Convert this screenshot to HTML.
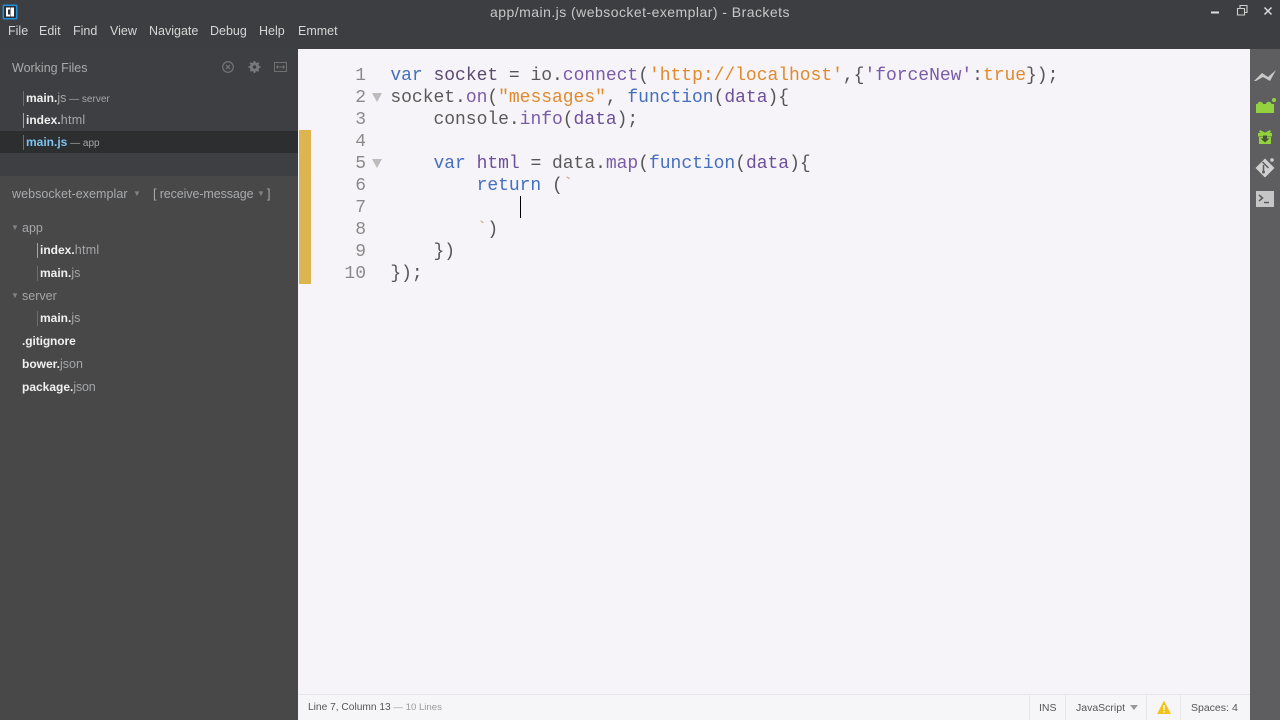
<!DOCTYPE html>
<html><head><meta charset="utf-8"><style>
html,body{margin:0;padding:0;width:1280px;height:720px;overflow:hidden;background:#f6f4f8}
div,span{box-sizing:border-box}
.a{position:absolute;white-space:pre;line-height:16px}
body{font-family:"Liberation Sans",sans-serif;font-size:12.5px;color:#e0e0e0}
#top{position:absolute;left:0;top:0;width:1280px;height:49px;background:#3d3e41}
#wf{position:absolute;left:0;top:49px;width:298px;height:127px;background:#3e3f42}
#tree{position:absolute;left:0;top:176px;width:298px;height:544px;background:#484849}
#sel{position:absolute;left:0;top:131px;width:298px;height:22px;background:#2d2e30}
#bar{position:absolute;left:1250px;top:49px;width:30px;height:671px;background:#5e5e60}
#st{position:absolute;left:298px;top:694px;width:952px;height:26px;background:#f6f6f8;border-top:1px solid #e6e6e8}
.m{color:#d6d6d6;top:23px;font-size:12.5px}
.b{font-weight:bold;color:#f0f0f0;font-size:12px}
.g{color:#a5a6a8;font-size:12.5px}
.s{color:#a5a6a8;font-size:10px}
.bar{position:absolute;width:1px;height:15px}
.code{position:absolute;left:390.4px;top:65px;font:18px/22px "Liberation Mono",monospace;color:#555;white-space:pre;letter-spacing:-.03px}
.ln{position:absolute;left:330px;width:36px;text-align:right;font:18px/22px "Liberation Mono",monospace;color:#8a8a8a}
.k{color:#446fbd}.v{color:#6c4f9a}.d{color:#5b4a70}.str{color:#e08a2c}.bt{color:#c9a47e}.t{color:#5a5a5a}.pr{color:#7a5ba8}
.fold{position:absolute;left:372px;width:0;height:0;border-left:5.5px solid transparent;border-right:5.5px solid transparent;border-top:9px solid #bcbcbc}
.st{top:700px;font-size:10.5px;color:#555}
.sep{position:absolute;top:695px;width:1px;height:25px;background:#e8e8ea}
</style></head><body>
<div id="top"></div><div id="wf"></div><div id="tree"></div><div id="sel"></div><div id="bar"></div>

<svg class="a" style="left:2px;top:4px" width="16" height="16" viewBox="0 0 16 16"><rect x=".5" y=".5" width="15" height="15" rx="1.500" fill="#1f8fd6"/><rect x="2" y="2" width="12" height="12" fill="#2a3036"/><path d="M4 3.500h4v9H4z" fill="#fff"/><path d="M8.500 3.500H12v9H8.500z" fill="#fff"/><path d="M6 5.500h2v5H6z" fill="#2a3036"/></svg>
<div class="a" style="left:0;width:1280px;top:3px;text-align:center;font-size:14px;line-height:18px;color:#c8c8ca;letter-spacing:.46px">app/main.js (websocket-exemplar) - Brackets</div>
<svg class="a" style="left:1205px;top:0" width="75" height="20" viewBox="1205 0 75 20"><path d="M1211 12.500h8" stroke="#ddd" stroke-width="2"/><path d="M1237.500 8.500h7v6.500h-7zM1240 8V5.500h7v7h-2.500" fill="none" stroke="#ccc" stroke-width="1.100"/><path d="M1264.500 7.500l7 7M1271.500 7.500l-7 7" stroke="#ddd" stroke-width="1.500"/></svg>

<div class="a m" style="left:8px">File</div>
<div class="a m" style="left:39px">Edit</div>
<div class="a m" style="left:73px">Find</div>
<div class="a m" style="left:110px">View</div>
<div class="a m" style="left:149px">Navigate</div>
<div class="a m" style="left:210px">Debug</div>
<div class="a m" style="left:259px">Help</div>
<div class="a m" style="left:298px">Emmet</div>

<div class="a" style="left:12px;top:60px;font-size:12.5px;color:#a9aaac">Working Files</div>
<svg class="a" style="left:220px;top:59px" width="70" height="16" viewBox="0 0 70 16"><circle cx="8" cy="8" r="5.300" fill="none" stroke="#6f7072" stroke-width="1.300"/><path d="M6 6l4 4M10 6l-4 4" stroke="#6f7072" stroke-width="1.300"/><circle cx="34.500" cy="8" r="3.300" fill="none" stroke="#77787a" stroke-width="3"/><path d="M34.500 2v2M34.500 12v2M28.500 8h2M38.500 8h2M30.300 3.800l1.500 1.500M37.200 10.700l1.500 1.500M38.700 3.800L37.200 5.300M31.800 10.700l-1.500 1.500" stroke="#77787a" stroke-width="1.800"/><rect x="54.500" y="3.500" width="12" height="9" fill="none" stroke="#6f7072"/><path d="M56.500 8h8M58 6.500L56.500 8 58 9.500M63 6.500L64.500 8 63 9.500" fill="none" stroke="#6f7072"/></svg>

<div class="bar" style="left:23px;top:91px;background:#b0533f"></div>
<div class="a" style="left:26px;top:90px"><span class="b">main.</span><span class="g">js</span><span class="s"> — server</span></div>
<div class="bar" style="left:23px;top:113px;background:#c8a05a"></div>
<div class="a" style="left:26px;top:112px"><span class="b">index.</span><span class="g" style="letter-spacing:.3px">html</span></div>
<div class="bar" style="left:23px;top:135px;background:#b0533f"></div>
<div class="a" style="left:26px;top:134px"><span class="b" style="color:#7cc4f0">main.js</span><span class="s"> — app</span></div>

<div class="a" style="left:12px;top:186px;color:#a9aaac;letter-spacing:.05px">websocket-exemplar</div>
<div class="a" style="left:133px;top:186px;color:#808184;font-size:8px">▼</div>
<div class="a" style="left:153px;top:186px;color:#a9aaac;letter-spacing:-.1px">[ receive-message</div>
<div class="a" style="left:257px;top:186px;color:#808184;font-size:8px">▼</div>
<div class="a" style="left:267px;top:186px;color:#a9aaac">]</div>

<div class="a" style="left:11px;top:220px;color:#808184;font-size:8px">▼</div>
<div class="a g" style="left:22px;top:220px">app</div>
<div class="bar" style="left:37px;top:243px;background:#c8a05a"></div>
<div class="a" style="left:40px;top:242px"><span class="b">index.</span><span class="g" style="letter-spacing:.3px">html</span></div>
<div class="bar" style="left:37px;top:266px;background:#b0533f"></div>
<div class="a" style="left:40px;top:265px"><span class="b">main.</span><span class="g">js</span></div>
<div class="a" style="left:11px;top:288px;color:#808184;font-size:8px">▼</div>
<div class="a g" style="left:22px;top:288px">server</div>
<div class="bar" style="left:37px;top:311px;background:#b0533f"></div>
<div class="a" style="left:40px;top:310px"><span class="b">main.</span><span class="g">js</span></div>
<div class="a" style="left:22px;top:333px"><span class="b" style="letter-spacing:-.1px">.gitignore</span></div>
<div class="a" style="left:22px;top:356px"><span class="b">bower.</span><span class="g">json</span></div>
<div class="a" style="left:22px;top:379px"><span class="b">package.</span><span class="g" style="letter-spacing:-.2px">json</span></div>

<div style="position:absolute;left:299px;top:130px;width:12px;height:154px;background:#dcb551"></div>

<div class="ln" style="top:65px">1</div>
<div class="ln" style="top:87px">2</div>
<div class="ln" style="top:109px">3</div>
<div class="ln" style="top:131px">4</div>
<div class="ln" style="top:153px">5</div>
<div class="ln" style="top:175px">6</div>
<div class="ln" style="top:197px">7</div>
<div class="ln" style="top:219px">8</div>
<div class="ln" style="top:241px">9</div>
<div class="ln" style="top:263px">10</div>
<div class="fold" style="top:93px"></div>
<div class="fold" style="top:159px"></div>

<div class="code"><span class="k">var</span> <span class="d">socket</span> = <span class="t">io</span>.<span class="pr">connect</span>(<span class="str">'http://localhost'</span>,{<span class="pr">'forceNew'</span>:<span class="str">true</span>});
<span class="t">socket</span>.<span class="pr">on</span>(<span class="str">"messages"</span>, <span class="k">function</span>(<span class="v">data</span>){
    <span class="t">console</span>.<span class="pr">info</span>(<span class="v">data</span>);

    <span class="k">var</span> <span class="v">html</span> = <span class="t">data</span>.<span class="pr">map</span>(<span class="k">function</span>(<span class="v">data</span>){
        <span class="k">return</span> (<span class="bt">`</span>

        <span class="bt">`</span>)
    })
});</div>
<div style="position:absolute;left:520px;top:196px;width:1px;height:22px;background:#000"></div>

<div id="st"></div>
<div class="a st" style="left:308px;font-size:10.2px"><span>Line 7, Column 13</span><span style="color:#9a9a9c;font-size:9.6px"> — 10 Lines</span></div>
<div class="sep" style="left:1029px"></div><div class="sep" style="left:1065px"></div><div class="sep" style="left:1146px"></div><div class="sep" style="left:1180px"></div>
<div class="a st" style="left:1039px">INS</div>
<div class="a st" style="left:1076px">JavaScript</div>
<div style="position:absolute;left:1130px;top:705px;width:0;height:0;border-left:4px solid transparent;border-right:4px solid transparent;border-top:5px solid #9a9a9c"></div>
<svg class="a" style="left:1156px;top:700px" width="16" height="15" viewBox="0 0 16 15"><path d="M8 .5L15 14H1z" fill="#f2c21a"/><path d="M7.300 5h1.400v5H7.300zM7.300 11h1.400v1.500H7.300z" fill="#fff"/></svg>
<div class="a st" style="left:1191px">Spaces:</div>
<div class="a st" style="left:1232px">4</div>

<svg class="a" style="left:1250px;top:49px" width="30" height="171" viewBox="1250 49 30 171">
<path d="M1254 81l8-8 6 4 8-7-6 11-7-4-7 4z" fill="#c8c8c8"/>
<path d="M1256 113v-9h1.500a2.800 2.800 0 0 1 5.500 0h3a2.800 2.800 0 0 1 5.500 0h2.500v9z" fill="#93d23e"/><circle cx="1274" cy="100" r="2" fill="#93d23e"/>
<path d="M1259 137h12v7h-12zM1258 133h14v3.500h-14z" fill="#93d23e"/><path d="M1259.500 131l5.500 3 5.500-3" fill="none" stroke="#93d23e" stroke-width="2.200"/><path d="M1263 135.500h4v3h2.500l-4.500 4-4.500-4h2.500z" fill="#46523a"/>
<path d="M1265 158.500l9.500 9.500-9.500 9.500-9.500-9.500z" fill="#cfcfcf"/><path d="M1262.500 162l6 6M1263.500 165v7" stroke="#5e5e60" stroke-width="1.500" fill="none"/><circle cx="1263.500" cy="172" r="1.500" fill="#5e5e60"/><circle cx="1272" cy="160" r="1.800" fill="#cfcfcf"/>
<rect x="1256" y="191" width="18" height="16" fill="#c6c6c6"/><path d="M1259 195l3.500 3-3.500 3M1264 202.500h5" fill="none" stroke="#5a5a5c" stroke-width="1.500"/>
</svg>
</body></html>
